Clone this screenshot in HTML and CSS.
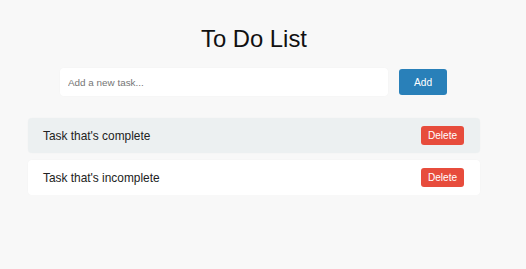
FILE: index.html
```html
<!DOCTYPE html>
<html lang="en">
<head>
<meta charset="utf-8">
<title>To Do List</title>
<link rel="stylesheet" href="styles.css">
</head>
<body>
<div class="app">
  <h1 class="title">To Do List</h1>
  <div class="add-row">
    <input class="task-input" type="text" placeholder="Add a new task...">
    <button class="add-btn">Add</button>
  </div>
  <ul class="task-list">
    <li class="task complete">
      <span class="task-text">Task that's complete</span>
      <button class="delete-btn">Delete</button>
    </li>
    <li class="task">
      <span class="task-text">Task that's incomplete</span>
      <button class="delete-btn">Delete</button>
    </li>
  </ul>
</div>
</body>
</html>
```
FILE: styles.css
```css
html, body {
  margin: 0;
  padding: 0;
  background: #f8f8f8;
  font-family: "Liberation Sans", Arial, sans-serif;
}

.app {
  width: 452px;
  margin-left: 28px;
  padding-top: 25px;
}

.title {
  margin: 0;
  font-size: 23.8px;
  line-height: 28px;
  font-weight: normal;
  text-align: center;
  color: #111;
}

.add-row {
  display: flex;
  align-items: center;
  gap: 11px;
  margin: 15px 33px 0 32px;
}

.task-input {
  flex: 1;
  height: 28px;
  box-sizing: border-box;
  border: none;
  border-radius: 4px;
  background: #fff;
  padding: 0 8px;
  font-family: inherit;
  font-size: 9.9px;
  color: #333;
  outline: none;
  box-shadow: 0 0 2px rgba(0,0,0,0.03);
}

.task-input::placeholder {
  color: #757575;
}

.add-btn {
  width: 48px;
  height: 26px;
  border: none;
  border-radius: 3px;
  background: #2980b9;
  color: #fff;
  font-family: inherit;
  font-size: 10.2px;
  padding: 0;
}

.task-list {
  list-style: none;
  margin: 22px 0 0 0;
  padding: 0;
  display: flex;
  flex-direction: column;
  gap: 7px;
}

.task {
  display: flex;
  align-items: center;
  justify-content: space-between;
  height: 35px;
  box-sizing: border-box;
  padding: 0 16px 0 15px;
  background: #fff;
  border-radius: 4px;
  box-shadow: 0 0 2px rgba(0,0,0,0.03);
}

.task.complete {
  background: #ecf0f1;
}

.task-text {
  font-size: 11.9px;
  color: #222;
}

.delete-btn {
  width: 43px;
  height: 19px;
  border: none;
  border-radius: 3px;
  background: #e74c3c;
  color: #fff;
  font-family: inherit;
  font-size: 10.1px;
  padding: 0;
}
```
